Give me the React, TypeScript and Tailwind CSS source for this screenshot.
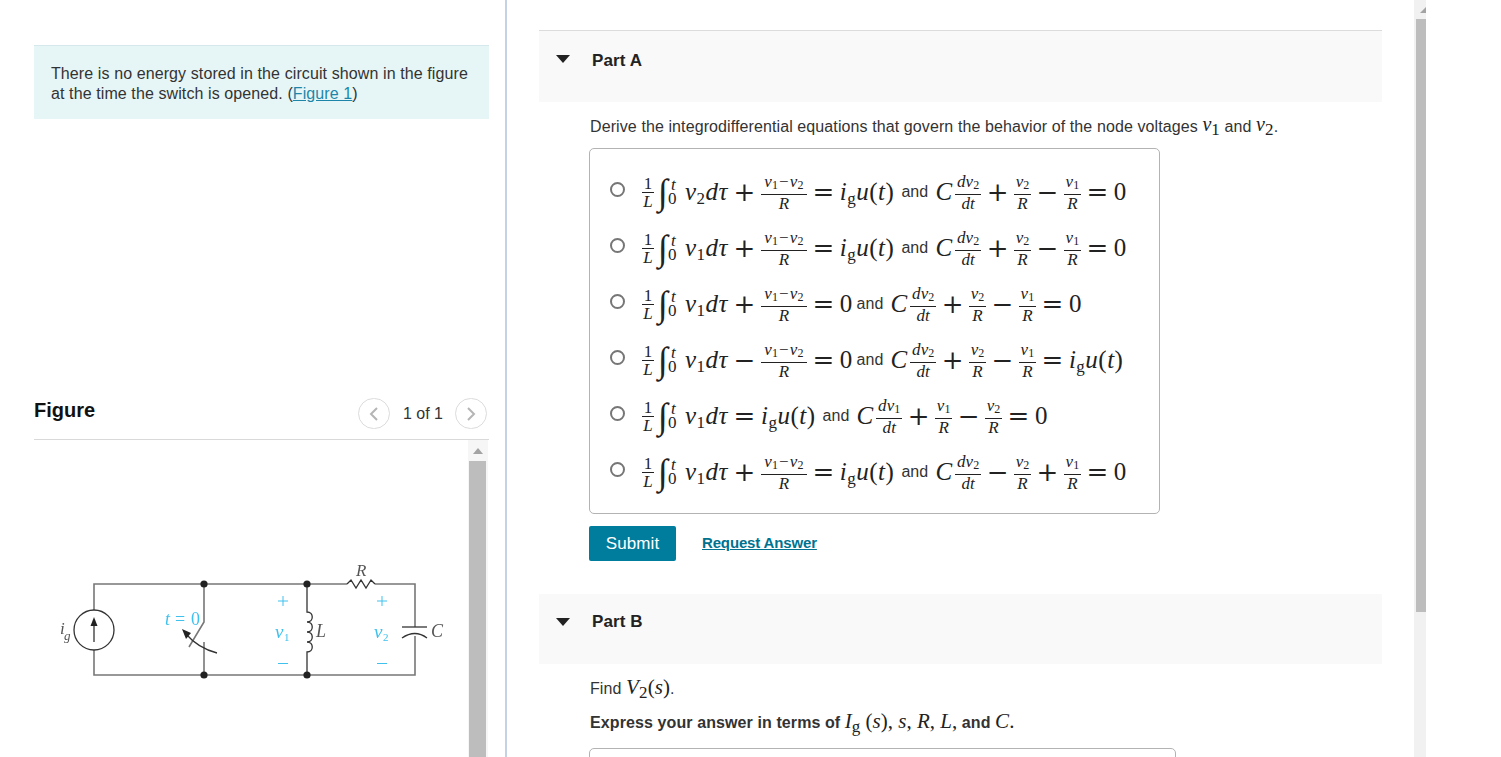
import type { ReactNode } from "react";

const math = "font-['Liberation_Serif',serif]";

function I({ children }: { children: ReactNode }) {
  return <span className="italic">{children}</span>;
}

function Sub({ children, small }: { children: ReactNode; small?: boolean }) {
  return (
    <span className={small ? "text-[12px] align-[-2px]" : "text-[17px] align-[-4px]"}>{children}</span>
  );
}

function Frac({ num, den, w }: { num: ReactNode; den: ReactNode; w: string }) {
  return (
    <span className={`inline-flex flex-col items-center text-[17px] leading-[15px] ${w}`}>
      <span className="pb-[1px] whitespace-nowrap">{num}</span>
      <span className="w-full border-t border-[#222] pt-[1px] text-center whitespace-nowrap">{den}</span>
    </span>
  );
}

function Op({ children }: { children: ReactNode }) {
  return <span className="mx-[5.5px] text-[26px] leading-none font-['DejaVu_Serif',serif] font-extralight">{children}</span>;
}

function V({ n, small }: { n: string; small?: boolean }) {
  return (
    <span className="whitespace-nowrap">
      <I>v</I>
      <Sub small={small}>{n}</Sub>
    </span>
  );
}

function Lead({ n }: { n: string }) {
  return (
    <span className="flex items-center">
      <Frac num="1" den={<I>L</I>} w="w-[12px]" />
      <span className="ml-[4px] text-[36px] leading-none italic">∫</span>
      <span className="flex w-[12px] flex-col text-[17px] leading-[14px]">
        <span className="pl-[3px] italic">t</span>
        <span>0</span>
      </span>
      <span className="ml-[5px] whitespace-nowrap text-[25px] tracking-[0.5px]">
        <V n={n} />
        <I>dτ</I>
      </span>
    </span>
  );
}

function Diff() {
  return (
    <Frac
      w="w-[46px]"
      num={
        <>
          <V n="1" small />
          <span className="mx-[1px]">−</span>
          <V n="2" small />
        </>
      }
      den={<I>R</I>}
    />
  );
}

function Ratio({ n }: { n: string }) {
  return <Frac w="w-[17px]" num={<V n={n} small />} den={<I>R</I>} />;
}

function Ig() {
  return (
    <span className="whitespace-nowrap pr-[3px] text-[25px] tracking-[0.5px]">
      <I>i</I>
      <Sub>g</Sub>
      <I>u</I>(<I>t</I>)
    </span>
  );
}

function And() {
  return <span className="ml-[4px] mr-[7px] font-['Liberation_Sans',sans-serif] text-[16px] text-[#333]">and</span>;
}

function Deriv({ n }: { n: string }) {
  return (
    <span className="flex items-center">
      <span className="text-[25px] italic">C</span>
      <span className="ml-[3px] flex">
        <Frac
          w="w-[26px]"
          num={
            <>
              <I>d</I>
              <V n={n} small />
            </>
          }
          den={<I>dt</I>}
        />
      </span>
    </span>
  );
}

function Row({ children }: { children: ReactNode }) {
  return (
    <div className="flex h-[56px] items-center">
      <span className="mt-[-5px] h-[15px] w-[15px] rounded-full border-[2px] border-[#767676] bg-white" />
      <div className={`ml-[17px] flex items-center text-[22px] text-[#222] ${math}`}>{children}</div>
    </div>
  );
}

function Zero() {
  return <span className="text-[25px]">0</span>;
}

function PartHeader({ label, h, top }: { label: string; h: string; top: string }) {
  return (
    <div className={`flex items-start bg-[#f9f9f9] pl-[17px] ${h}`}>
      <svg width="14" height="8" viewBox="0 0 14 8" className="mt-[24px]">
        <path d="M0 0h14L7 8z" fill="#222" />
      </svg>
      <span className={`ml-[22px] text-[17px] font-bold leading-[20px] text-[#222] ${top}`}>{label}</span>
    </div>
  );
}

function Circuit() {
  const wire = "#777";
  const cyan = "#3fc1ee";
  return (
    <svg width="434" height="317" viewBox="34 440 434 317" className="blur-[0.3px]">
      <g fill="none" stroke={wire} strokeWidth="1.6">
        <path d="M94 610V584H347" />
        <path d="M375 584H415V627" />
        <path d="M415 636V675H94V650" />
        <path d="M204 584V622L189 647" />
        <path d="M204 642V675" />
      </g>
      <g fill="none" stroke="#333" strokeWidth="1.3">
        <circle cx="94" cy="630" r="20" />
        <path d="M94 642V624" />
        <path d="M347 584l4-4 5 8 5-8 5 8 5-8 4 4" />
        <path d="M307 584V612c7 0 7 10 0 10c7 0 7 10 0 10c7 0 7 10 0 10c7 0 7 10 0 10V675" />
        <path d="M402 627H427" />
        <path d="M402 638Q415 629 427 638" />
        <path d="M217 653Q198 648 186 634" />
      </g>
      <path d="M94 617l-3.500 9h7z" fill="#222" />
      <path d="M182 629l9 4-5 6z" fill="#222" />
      {[
        [204, 584],
        [307, 584],
        [204, 675],
        [307, 675],
      ].map(([cx, cy]) => (
        <circle key={`${cx}-${cy}`} cx={cx} cy={cy} r="3.6" fill="#222" />
      ))}
      <g fontFamily="Liberation Serif, serif" fontStyle="italic" fill="#555">
        <text x="60" y="634" fontSize="17">i</text>
        <text x="64" y="640" fontSize="13">g</text>
        <text x="356" y="576" fontSize="17">R</text>
        <text x="316" y="637" fontSize="18">L</text>
        <text x="431" y="637" fontSize="18">C</text>
      </g>
      <g fontFamily="Liberation Serif, serif" fill={cyan}>
        <text x="165" y="625" fontSize="18" fontStyle="italic">t</text>
        <text x="175" y="625" fontSize="18">=</text>
        <text x="191" y="625" fontSize="18">0</text>
        <text x="275" y="638" fontSize="19" fontStyle="italic">v</text>
        <text x="284" y="641" fontSize="11">1</text>
        <text x="374" y="638" fontSize="19" fontStyle="italic">v</text>
        <text x="383" y="641" fontSize="11">2</text>
      </g>
      <g stroke={cyan} strokeWidth="1">
        <path d="M278 601h10M283 596v10M377 601h10M382 596v10M278 663.500h10M377 663.500h10" />
      </g>
    </svg>
  );
}

function NavButton({ dir }: { dir: "prev" | "next" }) {
  return (
    <span className="flex h-[31px] w-[32px] items-center justify-center rounded-full border border-[#dcdcdc] bg-white">
      <svg width="10" height="14" viewBox="0 0 10 14" fill="none" stroke="#b5b5b5" strokeWidth="2">
        <path d={dir === "prev" ? "M8 1L2 7l6 6" : "M2 1l6 6-6 6"} />
      </svg>
    </span>
  );
}

export default function App() {
  return (
    <div className="flex h-[757px] w-[1501px] overflow-hidden bg-white font-['Liberation_Sans',Arial,sans-serif] text-[16px] tracking-[0.1px] text-[#333]">
      {/* Left pane */}
      <div className="w-[505px] shrink-0 pl-[34px] pr-[16px] pt-[45px]">
        <div className="h-[74px] border-t border-[#d5e8ec] bg-[#e6f6f7] px-[17px] pt-[18px] leading-[20px]">
          <div>There is no energy stored in the circuit shown in the figure</div>
          <div>
            <span>at the time the switch is opened. (</span>
            <span className="text-[#1d86a8] underline">Figure 1</span>
            <span>)</span>
          </div>
        </div>
        <div className="mt-[279px] flex h-[42px] items-start justify-between border-b border-[#d9d9d9]">
          <span className="text-[20px] font-bold leading-[24px] tracking-normal text-[#111]">Figure</span>
          <div className="mr-[2px] flex items-center">
            <NavButton dir="prev" />
            <span className="ml-[13px] mr-[12px] leading-[31px] tracking-normal">1 of 1</span>
            <NavButton dir="next" />
          </div>
        </div>
        <div className="flex">
          <Circuit />
          <div className="flex h-[317px] w-[20px] flex-col bg-[#f6f6f6] pl-[1px] pr-[2px]">
            <div className="flex h-[21px] items-center justify-center">
              <svg width="10" height="6" viewBox="0 0 10 6">
                <path d="M0 6L5 0l5 6z" fill="#a3a3a3" />
              </svg>
            </div>
            <div className="flex-1 bg-[#bdbdbd]" />
          </div>
        </div>
      </div>

      <div className="w-[2px] shrink-0 bg-[#c3d2e5]" />

      {/* Questions */}
      <div className="w-[875px] shrink-0 pl-[32px] pt-[30px]">
        <div className="border-t border-[#dcdcdc]">
          <PartHeader label="Part A" h="h-[71px]" top="mt-[20px]" />
        </div>
        <div className="pl-[50px]">
          <div className="ml-[1px] mt-[15px] flex h-[20px] items-center whitespace-pre leading-[20px]">
            Derive the integrodifferential equations that govern the behavior of the node voltages{" "}
            <span className={`text-[20px] text-[#222] ${math}`}>
              <V n="1" />
            </span>
            {" and "}
            <span className={`text-[20px] text-[#222] ${math}`}>
              <V n="2" />
            </span>
            .
          </div>
          <div className="mt-[11px] h-[366px] w-[571px] rounded-[5px] border border-[#b3b3b3] pl-[20px] pt-[15px]">
            <Row>
              <Lead n="2" />
              <Op>+</Op>
              <Diff />
              <Op>=</Op>
              <Ig />
              <And />
              <Deriv n="2" />
              <Op>+</Op>
              <Ratio n="2" />
              <Op>−</Op>
              <Ratio n="1" />
              <Op>=</Op>
              <Zero />
            </Row>
            <Row>
              <Lead n="1" />
              <Op>+</Op>
              <Diff />
              <Op>=</Op>
              <Ig />
              <And />
              <Deriv n="2" />
              <Op>+</Op>
              <Ratio n="2" />
              <Op>−</Op>
              <Ratio n="1" />
              <Op>=</Op>
              <Zero />
            </Row>
            <Row>
              <Lead n="1" />
              <Op>+</Op>
              <Diff />
              <Op>=</Op>
              <Zero />
              <And />
              <Deriv n="2" />
              <Op>+</Op>
              <Ratio n="2" />
              <Op>−</Op>
              <Ratio n="1" />
              <Op>=</Op>
              <Zero />
            </Row>
            <Row>
              <Lead n="1" />
              <Op>−</Op>
              <Diff />
              <Op>=</Op>
              <Zero />
              <And />
              <Deriv n="2" />
              <Op>+</Op>
              <Ratio n="2" />
              <Op>−</Op>
              <Ratio n="1" />
              <Op>=</Op>
              <Ig />
            </Row>
            <Row>
              <Lead n="1" />
              <Op>=</Op>
              <Ig />
              <And />
              <Deriv n="1" />
              <Op>+</Op>
              <Ratio n="1" />
              <Op>−</Op>
              <Ratio n="2" />
              <Op>=</Op>
              <Zero />
            </Row>
            <Row>
              <Lead n="1" />
              <Op>+</Op>
              <Diff />
              <Op>=</Op>
              <Ig />
              <And />
              <Deriv n="2" />
              <Op>−</Op>
              <Ratio n="2" />
              <Op>+</Op>
              <Ratio n="1" />
              <Op>=</Op>
              <Zero />
            </Row>
          </div>
          <div className="mt-[12px] flex items-center">
            <span className="flex h-[35px] w-[87px] items-center justify-center rounded-[2px] bg-[#007c9c] text-[17px] text-white">
              Submit
            </span>
            <span className="ml-[26px] text-[15px] font-bold tracking-[-0.15px] text-[#00728f] underline">Request Answer</span>
          </div>
        </div>
        <div className="mt-[33px]">
          <PartHeader label="Part B" h="h-[70px]" top="mt-[18px]" />
        </div>
        <div className="pl-[50px]">
          <div className="ml-[1px] mt-[13px] h-[20px] leading-[20px]">
            Find{" "}
            <span className={`text-[21px] text-[#222] ${math}`}>
              <I>V</I>
              <Sub>2</Sub>(<I>s</I>)
            </span>
            .
          </div>
          <div className="ml-[1px] mt-[14px] h-[20px] font-bold leading-[20px] whitespace-nowrap">
            Express your answer in terms of{" "}
            <span className={`text-[21px] font-normal tracking-normal text-[#222] ${math}`}>
              <I>I</I>
              <Sub>g</Sub> (<I>s</I>), <I>s</I>, <I>R</I>, <I>L</I>,
            </span>{" "}
            and{" "}
            <span className={`text-[21px] font-normal text-[#222] ${math}`}>
              <I>C</I>.
            </span>
          </div>
          <div className="mt-[17px] h-[40px] w-[587px] rounded-[5px] border border-[#b3b3b3]" />
        </div>
      </div>

      {/* Page scrollbar */}
      <div className="ml-[32px] flex h-[757px] w-[12px] flex-col bg-[#f1f1f1] pl-[2px]">
        <div className="flex h-[19px] items-center justify-end">
          <svg width="6" height="6" viewBox="0 0 6 6">
            <path d="M0 6L6 0v6z" fill="#a3a3a3" />
          </svg>
        </div>
        <div className="h-[593px] bg-[#bdbdbd]" />
      </div>
    </div>
  );
}
